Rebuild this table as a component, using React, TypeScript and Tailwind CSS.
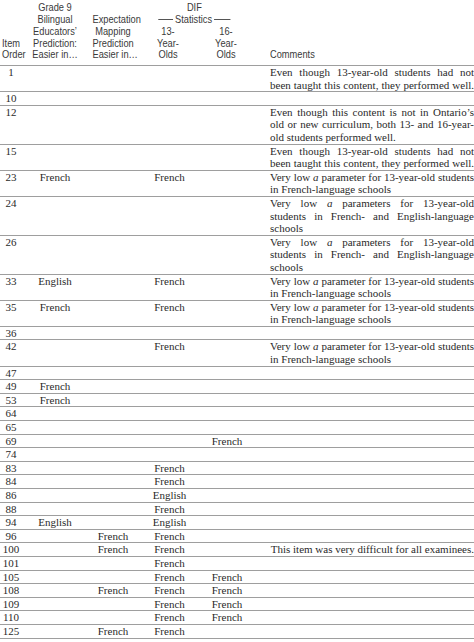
import React from "react";

type Line = { t: React.ReactNode; j?: boolean };
type Row = {
  n: string;
  g?: string;
  e?: string;
  a13?: string;
  a16?: string;
  c?: Line[];
  right?: string;
};

const lowA: Line[] = [
  { t: <>Very low <i>a</i> parameter for 13-year-old students</>, j: true },
  { t: "in French-language schools" },
];
const lowAs: Line[] = [
  { t: <>Very low <i>a</i> parameters for 13-year-old</>, j: true },
  { t: "students in French- and English-language", j: true },
  { t: "schools" },
];
const taught: Line[] = [
  { t: "Even though 13-year-old students had not", j: true },
  { t: "been taught this content, they performed well.", j: true },
];

const rows: Row[] = [
  { n: "1", c: taught },
  { n: "10" },
  {
    n: "12",
    c: [
      { t: "Even though this content is not in Ontario\u2019s", j: true },
      { t: "old or new curriculum, both 13- and 16-year-", j: true },
      { t: "old students performed well." },
    ],
  },
  { n: "15", c: taught },
  { n: "23", g: "French", a13: "French", c: lowA },
  { n: "24", c: lowAs },
  { n: "26", c: lowAs },
  { n: "33", g: "English", a13: "French", c: lowA },
  { n: "35", g: "French", a13: "French", c: lowA },
  { n: "36" },
  { n: "42", a13: "French", c: lowA },
  { n: "47" },
  { n: "49", g: "French" },
  { n: "53", g: "French" },
  { n: "64" },
  { n: "65" },
  { n: "69", a16: "French" },
  { n: "74" },
  { n: "83", a13: "French" },
  { n: "84", a13: "French" },
  { n: "86", a13: "English" },
  { n: "88", a13: "French" },
  { n: "94", g: "English", a13: "English" },
  { n: "96", e: "French", a13: "French" },
  { n: "100", e: "French", a13: "French", right: "This item was very difficult for all examinees." },
  { n: "101", a13: "French" },
  { n: "105", a13: "French", a16: "French" },
  { n: "108", e: "French", a13: "French", a16: "French" },
  { n: "109", a13: "French", a16: "French" },
  { n: "110", a13: "French", a16: "French" },
  { n: "125", e: "French", a13: "French" },
];

const grid = "grid grid-cols-[22px_66px_50px_60px_56px_220px]";
const narrow = "scale-x-[0.82] origin-center whitespace-nowrap text-center";

export default function App() {
  return (
    <div className="w-[474px] h-[642px] overflow-hidden bg-white">
      <div className="w-[474px]">
        {/* Header */}
        <div
          className={`${grid} items-end h-[66px] pb-[4px] border-b border-[#9e9e9e] text-[#3a3a3a] text-[11.3px] leading-[11.75px] font-['Liberation_Sans',sans-serif]`}
        >
          <div className={narrow}>
            Item
            <br />
            Order
          </div>
          <div className={narrow}>
            Grade 9
            <br />
            Bilingual
            <br />
            Educators&#8217;
            <br />
            Prediction:
            <br />
            Easier in&#8230;
          </div>
          <div className={narrow}>
            Expectation
            <br />
            Mapping
            <br />
            Prediction
            <br />
            Easier in&#8230;
          </div>
          <div className="col-span-2 flex flex-col">
            <div className={`${narrow} pr-[4px]`}>DIF</div>
            <div className="flex items-center justify-center gap-[2px] pr-[4px] scale-x-[0.82] origin-center">
              <span className="block w-[18px] h-px bg-[#555]" />
              <span>Statistics</span>
              <span className="block w-[20px] h-px bg-[#555]" />
            </div>
            <div className="grid grid-cols-[60px_56px]">
              <div className={narrow}>
                13-
                <br />
                Year-
                <br />
                Olds
              </div>
              <div className={narrow}>
                16-
                <br />
                Year-
                <br />
                Olds
              </div>
            </div>
          </div>
          <div className="pl-4">
            <div className="scale-x-[0.82] origin-left whitespace-nowrap">Comments</div>
          </div>
        </div>

        {/* Body */}
        <div className="text-[#2a2a2a] text-[11px] leading-[12.6px] font-['Liberation_Serif',serif]">
          {rows.map((r) => (
            <div key={r.n} className={`${grid} items-start border-b border-[#9e9e9e]`}>
              <div className="text-center">{r.n}</div>
              <div className="text-center">{r.g}</div>
              <div className="text-center">{r.e}</div>
              <div className="text-center pl-[3px]">{r.a13}</div>
              <div className="text-center pl-[2px]">{r.a16}</div>
              <div className="pl-4 min-h-[12.6px]">
                {r.c?.map((l, i) => (
                  <div
                    key={i}
                    className={l.j ? "text-justify [text-align-last:justify]" : "text-left"}
                  >
                    {l.t}
                  </div>
                ))}
                {r.right && (
                  <div className="flex justify-end -ml-[8px] whitespace-nowrap">
                    {r.right}
                  </div>
                )}
              </div>
            </div>
          ))}
        </div>
      </div>
    </div>
  );
}
